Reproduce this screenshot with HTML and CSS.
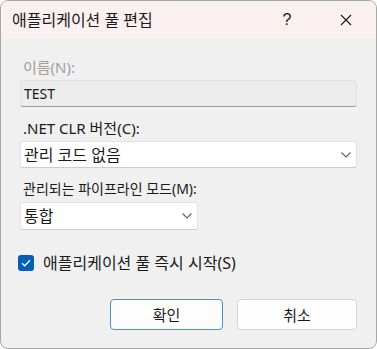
FILE: index.html
```html
<!DOCTYPE html>
<html lang="ko">
<head>
<meta charset="utf-8">
<link rel="stylesheet" href="styles.css">
</head>
<body>
<div class="window">
  <div class="titlebar">
    <div class="title">애플리케이션 풀 편집</div>
    <div class="tb-btn help">?</div>
    <div class="tb-btn close">
      <svg width="12" height="12" viewBox="0 0 12 12"><path d="M1 1L11 11M11 1L1 11" stroke="#1a1a1a" stroke-width="1.1" fill="none"/></svg>
    </div>
  </div>
  <div class="content">
    <div class="label disabled mid">이름(N):</div>
    <div class="field readonly">TEST</div>

    <div class="label gap mid">.NET CLR 버전(C):</div>
    <div class="field select">
      <span class="sel-text">관리 코드 없음</span>
      <svg class="chev" width="10" height="6" viewBox="0 0 10 6"><path d="M0.5 0.5L5 5L9.5 0.5" stroke="#606060" stroke-width="1.1" fill="none"/></svg>
    </div>

    <div class="label gap">관리되는 파이프라인 모드(M):</div>
    <div class="field select short">
      <span class="sel-text">통합</span>
      <svg class="chev" width="10" height="6" viewBox="0 0 10 6"><path d="M0.5 0.5L5 5L9.5 0.5" stroke="#606060" stroke-width="1.1" fill="none"/></svg>
    </div>

    <div class="check-row">
      <span class="checkbox">
        <svg width="10" height="8" viewBox="0 0 10 8"><path d="M1 4.2L3.7 6.8L9 1.2" stroke="#ffffff" stroke-width="1.3" fill="none"/></svg>
      </span>
      <span class="check-label">애플리케이션 풀 즉시 시작(S)</span>
    </div>

    <div class="buttons">
      <div class="btn ok">확인</div>
      <div class="btn cancel">취소</div>
    </div>
  </div>
</div>
</body>
</html>
```
FILE: styles.css
```css
html, body {
  margin: 0;
  padding: 0;
  background: #ffffff;
}
body {
  font-family: "Noto Sans", "Noto Sans CJK KR", sans-serif;
  font-size: 14px;
  color: #1a1a1a;
}
.window {
  width: 377px;
  height: 349px;
  box-sizing: border-box;
  border: 1px solid #a8a8a8;
  border-radius: 8px;
  background: #f0f0f0;
  overflow: hidden;
  display: flex;
  flex-direction: column;
}
.titlebar {
  height: 38px;
  background: #f9f0ef;
  display: flex;
  align-items: center;
}
.title {
  flex: 1;
  padding-left: 11px;
  font-size: 16px;
  color: #1a1a1a;
  line-height: 20px;
}
.tb-btn {
  height: 38px;
  display: flex;
  align-items: center;
  justify-content: center;
}
.help {
  width: 58px;
  font-size: 16px;
  font-family: "Liberation Sans", sans-serif;
}
.close {
  width: 60px;
}
.content {
  padding: 19px 19px 0 19px;
  display: flex;
  flex-direction: column;
}
.label {
  height: 18px;
  line-height: 18px;
  padding-left: 3px;
  margin-bottom: 4px;
}
.label.mid {
  font-size: 15px;
}
.label.gap {
  margin-top: 12px;
}
.disabled {
  color: #a0a0a0;
}
.field {
  height: 27px;
  box-sizing: border-box;
  border-radius: 3px;
  padding: 0 3px;
  display: flex;
  align-items: center;
  line-height: 18px;
}
.readonly {
  background: #ececec;
  border: 1px solid #e2e2e2;
  border-bottom-color: #9a9a9a;
  font-size: 14px;
  color: #1a1a1a;
}
.select {
  background: #ffffff;
  border: 1px solid #e3e3e3;
  border-bottom-color: #cdcdcd;
  justify-content: space-between;
  padding-right: 5px;
}
.sel-text {
  font-size: 16px;
}
.select.short {
  width: 178px;
  height: 28px;
}
.chev {
  display: block;
}
.check-row {
  margin-top: 25px;
  display: flex;
  align-items: center;
  height: 16px;
  margin-left: -2px;
}
.checkbox {
  width: 16px;
  height: 16px;
  border-radius: 3px;
  background: #005fb8;
  display: flex;
  align-items: center;
  justify-content: center;
}
.check-label {
  margin-left: 9px;
  line-height: 18px;
  font-size: 16px;
}
.buttons {
  margin-top: 28px;
  display: flex;
  justify-content: flex-end;
  gap: 14px;
}
.btn {
  height: 31px;
  box-sizing: border-box;
  background: #fdfdfd;
  border: 1px solid #d3d3d3;
  border-radius: 4px;
  display: flex;
  align-items: center;
  justify-content: center;
  font-size: 15px;
}
.ok {
  width: 113px;
  border: 1px solid #4d8fd0;
}
.cancel {
  width: 120px;
}
```
